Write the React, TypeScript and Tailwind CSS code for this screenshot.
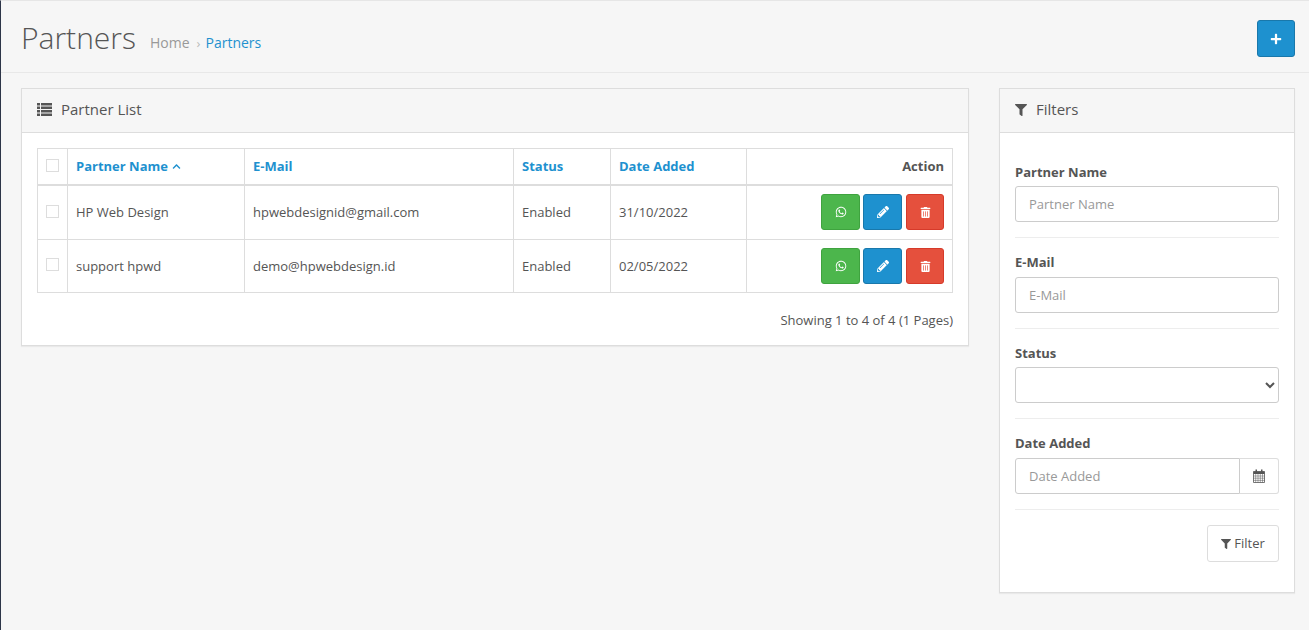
import { FaFilter, FaPencilAlt, FaPlus, FaTrashAlt, FaWhatsapp, FaChevronUp } from "react-icons/fa";

const rows = [
  { name: "HP Web Design", email: "hpwebdesignid@gmail.com", status: "Enabled", date: "31/10/2022" },
  { name: "support hpwd", email: "demo@hpwebdesign.id", status: "Enabled", date: "02/05/2022" },
];

const textCell = "border border-[#ddd] px-2 [tr:last-child_&]:pt-0.5";

function ListIcon() {
  return (
    <svg width="15" height="13" viewBox="0 0 15 13" fill="currentColor">
      <path d="M0 0h3v2.5H0zM4 0h11v2.5H4zM0 3.5h3V6H0zM4 3.5h11V6H4zM0 7h3v2.5H0zM4 7h11v2.5H4zM0 10.5h3V13H0zM4 10.5h11V13H4z" />
    </svg>
  );
}

function CalendarIcon() {
  return (
    <svg width="12" height="14" viewBox="0 0 12 14" className="text-[#555]">
      <path d="M0.5 2.5h11v11h-11z" fill="none" stroke="currentColor" strokeWidth="0.8" />
      <path d="M0.5 2.5h11v2.5h-11z" fill="currentColor" />
      <path d="M2.5 0.5h1.5v3H2.5zM8 0.5h1.5v3H8z" fill="currentColor" />
      <path d="M0.5 7h11M0.5 9.2h11M0.5 11.4h11M2.7 5v8.5M5 5v8.5M7.3 5v8.5M9.5 5v8.5" stroke="currentColor" strokeWidth="0.5" />
    </svg>
  );
}

export default function App() {
  return (
    <div className="min-h-[630px] bg-[#f6f6f6] border-l border-l-[#2d3548] border-t border-t-[#e6e6e6] text-[13px] text-[#555] font-['Open_Sans',sans-serif]">
      <header className="h-[72px] border-b border-[#e8e8e8] flex items-start justify-between pl-5 pr-[14px] pt-[19px]">
        <div className="flex items-baseline pt-px">
          <h1 className="text-[30px] leading-[33px] font-light text-[#555]">Partners</h1>
          <div className="flex items-baseline -translate-y-px">
            <span className="ml-[14px] text-[#999] text-[14px]">Home</span>
            <span className="ml-[7px] mr-[5px] text-[#bbb] text-[13px]">›</span>
            <span className="text-[#1e91cf] text-[14px]">Partners</span>
          </div>
        </div>
        <button className="w-[38px] h-[37px] rounded-[3px] bg-[#1e91cf] border border-[#1978ab] flex items-center justify-center text-white">
          <FaPlus size={12} />
        </button>
      </header>

      <main className="flex items-start justify-between pl-5 pr-[14px] pt-[15px]">
        <section className="w-[948px] border border-[#ddd] bg-white shadow-[0_1px_1px_rgba(0,0,0,0.05)]">
          <div className="h-[44px] pb-0.5 bg-[#f6f6f6] border-b border-[#ddd] flex items-center gap-[9px] pl-[15px] text-[15px]">
            <ListIcon />
            <span>Partner List</span>
          </div>
          <div className="p-[15px] pb-4">
            <table className="w-[916px] table-fixed border-collapse">
              <colgroup>
                <col className="w-[30px]" />
                <col className="w-[177px]" />
                <col className="w-[269px]" />
                <col className="w-[97px]" />
                <col className="w-[136px]" />
                <col />
              </colgroup>
              <thead>
                <tr className="h-[36px] border-b-2 border-[#ddd] font-bold text-left">
                  <th className="border border-[#ddd] border-b-2 px-2 font-normal">
                    <div className="w-[13px] h-[13px] border border-[#ddd] -mt-0.5" />
                  </th>
                  <th className="border border-[#ddd] border-b-2 px-2 text-[#1e91cf]">
                    <span className="inline-flex items-center gap-1">
                      Partner Name <FaChevronUp size={9} />
                    </span>
                  </th>
                  <th className="border border-[#ddd] border-b-2 px-2 text-[#1e91cf]">E-Mail</th>
                  <th className="border border-[#ddd] border-b-2 px-2 text-[#1e91cf]">Status</th>
                  <th className="border border-[#ddd] border-b-2 px-2 text-[#1e91cf]">Date Added</th>
                  <th className="border border-[#ddd] border-b-2 px-2 text-right">Action</th>
                </tr>
              </thead>
              <tbody>
                {rows.map((r) => (
                  <tr key={r.email} className="h-[55px] last:h-[53px]">
                    <td className="border border-[#ddd] px-2">
                      <div className="w-[13px] h-[13px] border border-[#ddd] -mt-0.5 [tr:last-child_&]:-mt-1" />
                    </td>
                    <td className={textCell}>{r.name}</td>
                    <td className={textCell}>{r.email}</td>
                    <td className={textCell}>{r.status}</td>
                    <td className={textCell}>{r.date}</td>
                    <td className="border border-[#ddd] px-2">
                      <div className="flex justify-end">
                        <button className="w-[39px] h-9 rounded-[3px] bg-[#4cb64c] border border-[#3fa33f] flex items-center justify-center text-white">
                          <FaWhatsapp size={12} />
                        </button>
                        <button className="ml-[3px] w-[39px] h-9 rounded-[3px] bg-[#1e91cf] border border-[#1978ab] flex items-center justify-center text-white">
                          <FaPencilAlt size={12} />
                        </button>
                        <button className="ml-1 w-[38px] h-9 rounded-[3px] bg-[#e5503d] border border-[#d63a2a] flex items-center justify-center text-white">
                          <FaTrashAlt size={11} />
                        </button>
                      </div>
                    </td>
                  </tr>
                ))}
              </tbody>
            </table>
            <div className="mt-[18px] text-right leading-[18px]">Showing 1 to 4 of 4 (1 Pages)</div>
          </div>
        </section>

        <aside className="w-[296px] border border-[#ddd] bg-white shadow-[0_1px_1px_rgba(0,0,0,0.05)]">
          <div className="h-[44px] pb-0.5 bg-[#f6f6f6] border-b border-[#ddd] flex items-center gap-[9px] pl-[15px] text-[15px]">
            <FaFilter size={12} />
            <span>Filters</span>
          </div>
          <div className="px-[15px] pt-[30px] pb-[30px]">
            <div className="border-b border-[#ededed] pb-[15px] mb-[15px]">
              <label className="block font-bold leading-[18px] mb-[5px]">Partner Name</label>
              <input
                placeholder="Partner Name"
                className="block w-full h-9 rounded-[3px] border border-[#ccc] bg-white px-[13px] text-[13px] placeholder:text-[#999]"
              />
            </div>
            <div className="border-b border-[#ededed] pb-[15px] mb-[15px]">
              <label className="block font-bold leading-[18px] mb-[6px]">E-Mail</label>
              <input
                placeholder="E-Mail"
                className="block w-full h-9 rounded-[3px] border border-[#ccc] bg-white px-[13px] text-[13px] placeholder:text-[#999]"
              />
            </div>
            <div className="border-b border-[#ededed] pb-[15px] mb-[15px]">
              <label className="block font-bold leading-[18px] mb-[5px]">Status</label>
              <select className="block w-full h-9 rounded-[3px] border border-[#ccc] bg-white px-2 text-[13px]" />
            </div>
            <div className="border-b border-[#ededed] pb-[15px] mb-[15px]">
              <label className="block font-bold leading-[18px] mb-[6px]">Date Added</label>
              <div className="flex h-9">
                <input
                  placeholder="Date Added"
                  className="min-w-0 flex-1 rounded-l-[3px] border border-[#ccc] bg-white px-[13px] pt-px text-[13px] placeholder:text-[#999]"
                />
                <button className="w-[39px] rounded-r-[3px] border border-l-0 border-[#ddd] bg-white flex items-center justify-center">
                  <CalendarIcon />
                </button>
              </div>
            </div>
            <div className="flex justify-end">
              <button className="h-[37px] w-[72px] rounded-[3px] border border-[#ddd] bg-white flex items-center justify-center gap-[3px]">
                <FaFilter size={10} />
                Filter
              </button>
            </div>
          </div>
        </aside>
      </main>
    </div>
  );
}
